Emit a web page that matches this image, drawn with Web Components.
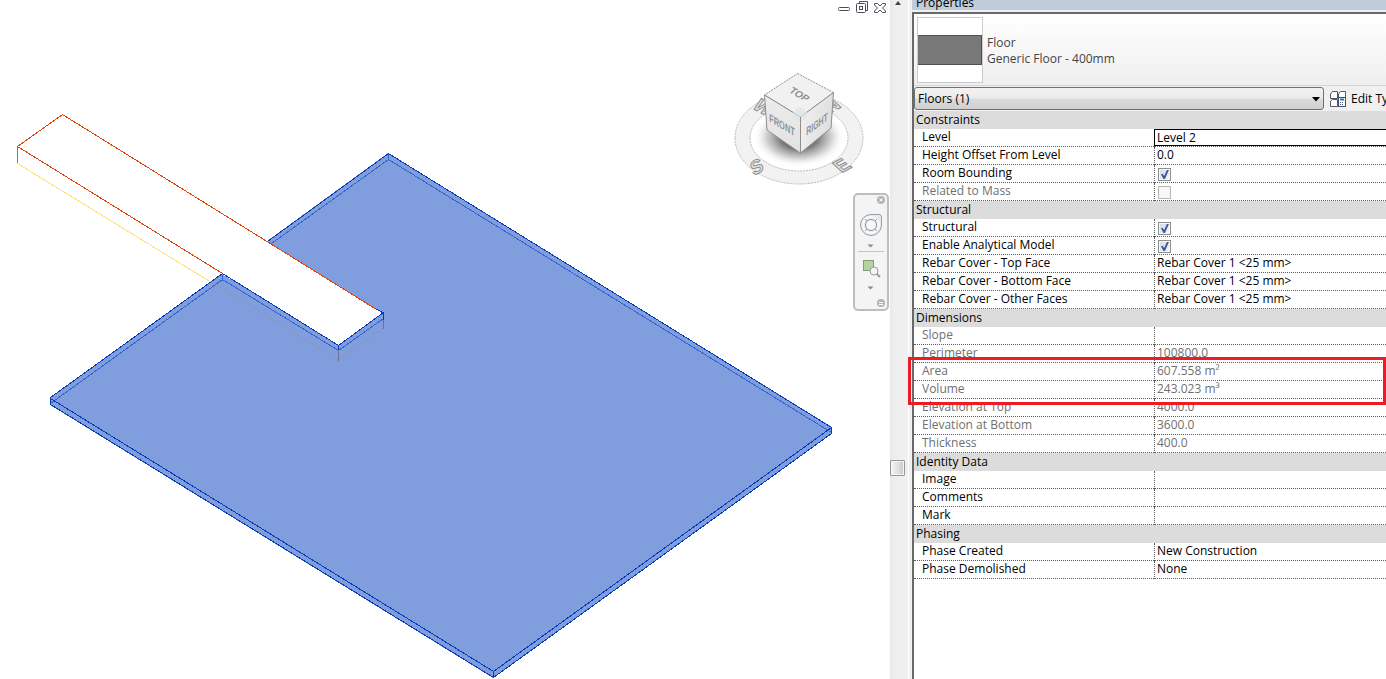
<!DOCTYPE html>
<html lang="en">
<head>
<meta charset="utf-8">
<title>Floor properties</title>
<style>
  html, body { height: 100%; margin: 0; }
  body { background: #fff; font: 12px/16px "Open Sans", "Noto Sans", sans-serif; color: #000; overflow: hidden; }
</style>
</head>
<body>
<modeler-app>
  <model-view slot="view">
    <window-buttons></window-buttons>
    <view-cube></view-cube>
    <nav-bar></nav-bar>
  </model-view>
  <scroll-track slot="scroll"></scroll-track>
  <property-palette slot="palette" heading="Properties" family="Floor" type="Generic Floor - 400mm"></property-palette>
</modeler-app>

<script>
const define = (name, html, setup) => {
  const template = document.createElement('template');
  template.innerHTML = html;
  customElements.define(name, class extends HTMLElement {
    constructor() {
      super();
      this.attachShadow({ mode: 'open' }).append(template.content.cloneNode(true));
    }
    connectedCallback() { if (setup) setup(this, this.shadowRoot); }
  });
};

define('modeler-app', `
  <style>
    :host { display: grid; grid-template-columns: minmax(0, 1fr) 22px 474px; height: 100vh; }
  </style>
  <slot name="view"></slot><slot name="scroll"></slot><slot name="palette"></slot>
`);

define('model-view', `
  <style>
    :host { display: block; position: relative; overflow: hidden; background: #fff; }
    .scene { display: block; width: 100%; height: 100%; fill: none; shape-rendering: crispEdges; }
    .tools { position: absolute; top: 0; right: 0; display: flex; flex-direction: column; align-items: flex-end; }
    .face { fill: #809dde; fill-rule: evenodd; }
    .edge { stroke: #063bb8; }
    .hidden { stroke: #3764cf; }
    .sketch { stroke: #dd4208; }
    .ghost { stroke: #8797c0; }
  </style>
  <svg class="scene" role="img" aria-label="Floor slab, 3D view">
    <path class="face" d="M388 153L832 427V433L493 678L50 405V398L222 274L267 241ZM222 274L338 345L383 313L267 241Z"/>
    <path class="ghost" d="M210 281L338 360L383 328"/>
    <path class="hidden" d="M50.500 403.500L222.500 279.500L338.500 350.500L383.500 318.500M271.500 243.500L388.500 159.500L831.500 432.500M388.500 153.500V159.500M222.500 274.500V280.500"/>
    <path class="edge" d="M267.500 241.500L388.500 153.500L831.500 427.500V433.500L493.500 677.500L50.500 404.500V397.500L222.500 273.500L338.500 345.500L383.500 312.500V320M376 309L383.500 313M831.500 427.500L493.500 671.500L50.500 398.500M493.500 671.500V677.500M338.500 345.500V351"/>
    <path stroke="#66738f" d="M338.500 350V361"/>
    <path stroke="#806a9d" d="M383.500 320V329"/>
    <path stroke="#ffe277" d="M17.500 163.500L211.500 282.500"/>
    <path stroke="#bd7405" d="M17.500 147V163"/>
    <path class="sketch" d="M222.500 273.500L17.500 146.500L62.500 114.500L376.500 309.500"/>
  </svg>
  <div class="tools"><slot></slot></div>
`);

define('window-buttons', `
  <style>
    :host { display: flex; gap: 6px; height: 16px; padding-right: 4px; margin-bottom: 48px; }
    button { width: 12px; height: 16px; padding: 0; border: 0; background: none; }
    svg { display: block; fill: none; stroke: #4a4f5c; }
  </style>
  <button aria-label="Minimise"><svg width="12" height="16" viewBox="0 1 12 16"><rect x=".5" y="8.500" width="11" height="3" rx="1" fill="#fff"/></svg></button>
  <button aria-label="Restore"><svg width="12" height="16" viewBox="0 1 12 16"><path d="M3.500 4V2.500H11.500V11.500H9.500" fill="#fff"/><rect x=".5" y="4.500" width="9" height="9" rx="1" fill="#fff"/><rect x="3.500" y="7.500" width="3" height="3"/></svg></button>
  <button aria-label="Close"><svg width="12" height="16" viewBox="0 0 12 16"><path fill="#fff" d="M.5 3.500H3.500L6 6L8.500 3.500H11.500V5L8.500 8L11.500 11V12.500H8.500L6 10L3.500 12.500H.5V11L3.500 8L.5 5Z"/></svg></button>
`);

define('view-cube', `
  <style>
    :host { display: block; margin-right: 20px; height: 129px; }
    svg { display: block; overflow: visible; }
    text { font: 700 12px "Liberation Sans", sans-serif; fill: #8f9397; text-anchor: middle; }
    .compass text { font-size: 19px; fill: #e4e4e4; stroke: #909090; stroke-width: 1px; }
  </style>
  <svg width="140" height="129" viewBox="730 64 140 129" role="img" aria-label="View cube">
    <defs>
      <radialGradient id="shade"><stop offset=".4" stop-color="#777"/><stop offset=".7" stop-color="#bbb" stop-opacity=".7"/><stop offset="1" stop-color="#fff" stop-opacity="0"/></radialGradient>
      <linearGradient id="right" x2="1" y2=".4"><stop stop-color="#f3f3f3"/><stop offset="1" stop-color="#dedede"/></linearGradient>
      <linearGradient id="front" x2="0" y2="1"><stop stop-color="#ececec"/><stop offset="1" stop-color="#e2e2e2"/></linearGradient>
    </defs>
    <path fill="#f2f2f2" fill-rule="evenodd" stroke="#bbb" stroke-dasharray="2 1" d="M735 138a64 46 0 1 0 128 0a64 46 0 1 0-128 0ZM750 138a49 33 0 1 0 98 0a49 33 0 1 0-98 0Z"/>
    <ellipse cx="799" cy="137" rx="46" ry="30" fill="url(#shade)"/>
    <g class="compass">
      <text transform="translate(759 112) rotate(28) skewX(-20)">W</text>
      <text transform="translate(836 110) rotate(-28) skewX(20)">N</text>
      <text transform="translate(759 173) rotate(-32) skewX(-10)">S</text>
      <text transform="translate(847 170) rotate(-28) skewX(20)">E</text>
    </g>
    <g stroke="#8e8e8e" stroke-linejoin="round">
      <path fill="#f1f1f1" stroke-dasharray="2 1" d="M797.500 73.500L833.500 92.500L800.500 117L764.500 95Z"/>
      <path fill="url(#front)" d="M764.500 95L800.500 117V153L767 130Z"/>
      <path fill="url(#right)" d="M800.500 117L833.500 92.500L831 128L800.500 153Z"/>
    </g>
    <path fill="#e1e4e6" opacity=".7" d="M793 112L799 107L807 111V117L801 122L793 118Z"/>
    <path stroke="#8e8e8e" d="M800.500 117V153"/>
    <text transform="matrix(.72 .42 -.6 .6 797 97)">TOP</text>
    <text transform="matrix(.62 .36 0 .95 782 129)">FRONT</text>
    <text transform="matrix(.58 -.42 0 .95 817 128)">RIGHT</text>
  </svg>
`);

define('nav-bar', `
  <style>
    :host { display: flex; flex-direction: column; align-items: center; box-sizing: border-box; width: 36px; height: 118px; margin-right: 1px;
            border: 2px solid #bdbdbd; border-radius: 5px; background: #f4f4f4; }
    button { display: block; padding: 0; border: 0; background: none; }
    svg { display: block; fill: none; }
    .small { align-self: flex-end; height: 10px; padding-right: 1px; }
    .rule { width: 26px; height: 1px; background: #c4c4c4; }
  </style>
  <button class="small" aria-label="Close navigation bar"><svg width="10" height="10"><circle cx="5" cy="5" r="4" fill="#b5b5b5"/><path d="M3.500 3.500L6.500 6.500M6.500 3.500L3.500 6.500" stroke="#fff"/></svg></button>
  <button aria-label="Steering wheel"><svg width="32" height="36">
    <path fill="#e8ebee" stroke="#9a9fa5" d="M16 9.500H24Q26.500 9.500 26.500 12V20A10.500 10.500 0 1 1 16 9.500Z"/>
    <circle cx="16" cy="20" r="8" stroke="#f8f9fa" stroke-width="2"/>
    <circle cx="16" cy="20" r="5.500" fill="#f6f7f8" stroke="#8f949a"/>
    <path stroke="#9a9fa5" d="M10 14L12 16M22 14L20 16M10 26L12 24M22 26L20 24"/></svg></button>
  <button aria-label="Steering wheel options"><svg width="32" height="10"><path fill="#888" d="M12.500 3.500H18.500L15.500 6.500Z"/></svg></button>
  <div class="rule"></div>
  <button aria-label="Zoom region"><svg width="32" height="32">
    <rect x="8.500" y="8.500" width="10" height="10" fill="#b7d0a5" stroke="#78a56d"/>
    <circle cx="19" cy="19" r="4" fill="#f4f7f9" stroke="#999"/><path d="M22 22L25 25" stroke="#999" stroke-width="2"/></svg></button>
  <button aria-label="Zoom options"><svg width="32" height="14"><path fill="#888" d="M12.500 2.500H18.500L15.500 5.500Z"/></svg></button>
  <button class="small" aria-label="Customise"><svg width="10" height="10"><circle cx="5" cy="5" r="4" fill="#b5b5b5"/><path d="M3 4.500H7M3 6.500H7" stroke="#fff"/></svg></button>
`);

define('scroll-track', `
  <style>
    :host { display: grid; grid-template-columns: 16px 2px 1px 3px; grid-template-rows: 460fr 16px 203fr; background: #f0f0f0; }
    .track { grid-area: 1 / 1 / 4 / 2; background: linear-gradient(90deg, #e8e8e8, #efefef 30%, #f0f0f0); }
    .groove { grid-area: 1 / 3 / 4 / 4; background: #fff; }
    svg { grid-area: 1 / 1; display: block; }
    button { grid-area: 2 / 1; width: 15px; border: 1px solid #979797; border-radius: 1px; padding: 0;
             background: linear-gradient(90deg, #f5f5f5, #e2e2e4 50%, #c8c8cd); box-shadow: inset 0 0 0 1px #f5f5f5; }
  </style>
  <div class="track"></div><div class="groove"></div>
  <svg width="16" height="8"><path d="M5 5L8 1L11 5Z" fill="#444"/></svg>
  <button aria-label="Scroll"></button>
`);

define('property-group', `
  <style>
    :host { display: block; position: relative; }
    table { width: 100%; border-collapse: separate; border-spacing: 0; table-layout: fixed; }
    col:first-child { width: 240px; }
    tr { height: 18px; }
    th, td { box-sizing: border-box; height: 18px; padding: 0; font-weight: 400; text-align: left; vertical-align: top; white-space: nowrap; line-height: 16px; }
    thead th { padding: 1px 0 0 2px; background: #dcdcdc; }
    tbody th { padding-left: 8px; border-bottom: 1px dotted #5c5c5c; }
    td { border-left: 1px dotted #5c5c5c; border-bottom: 1px dotted #5c5c5c; }
    .off { color: #707070; }
    output { display: block; padding-left: 2px; }
    input, select { display: block; box-sizing: border-box; margin: 0; border: 0; border-radius: 0; background: none; color: inherit; font: inherit; outline: 0; appearance: none; }
    input[type=text], select { width: 100%; height: 16px; padding: 0 2px; }
    td.active { border-left: 1px solid #000; }
    td.active input { height: 17px; padding: 0 2px; border: solid #000; border-width: 1px 0 1px 0; line-height: 15px; }
    input[type=checkbox] { width: 13px; height: 13px; margin: 3px 0 0 3px; border: 1px solid #8e8f8f; background: linear-gradient(135deg, #d4d9de, #f8f8f8); box-shadow: inset 0 0 0 1px #f6f6f6; }
    input[type=checkbox]:disabled { border-color: #b8b8b8; background: #f8f8f8; }
    input[type=checkbox]:checked::before { content: ""; display: block; width: 11px; height: 11px; background: #3f589b;
      clip-path: polygon(18% 48%, 34% 44%, 46% 64%, 72% 10%, 90% 10%, 54% 90%, 40% 90%); }
    .mark { position: absolute; top: 48px; left: -6px; right: 0; box-sizing: border-box; height: 48px; border: 3px solid #ed1c24; pointer-events: none; }
  </style>
  <table><colgroup><col><col></colgroup><thead><tr><th colspan="2" scope="colgroup"></th></tr></thead><tbody></tbody></table>
`);

/* Fills a group: each row is [label, kind, value]. */
const fillGroup = (group, { heading, rows, marked }) => {
  const root = group.shadowRoot;
  root.querySelector('thead th').textContent = heading;
  const body = root.querySelector('tbody');
  rows.forEach(([label, kind, value], i) => {
    const id = 'field' + i;
    const tr = body.insertRow();
    const th = document.createElement('th');
    th.scope = 'row';
    const caption = document.createElement('label');
    caption.htmlFor = id;
    caption.textContent = label;
    th.append(caption);
    tr.append(th);
    const td = tr.insertCell();
    const readOnly = kind === 'fixed' || kind === 'check-off';
    if (readOnly) tr.className = 'off';
    if (kind === 'active') td.className = 'active';
    let field;
    if (kind === 'fixed') {
      field = document.createElement('output');
      field.textContent = value;
    } else if (kind === 'choice') {
      field = document.createElement('select');
      field.add(new Option(value));
    } else {
      field = document.createElement('input');
      field.type = kind.startsWith('check') ? 'checkbox' : 'text';
      if (field.type === 'checkbox') { field.checked = value; field.disabled = readOnly; }
      else field.value = value;
    }
    field.id = id;
    td.append(field);
  });
  if (marked) {
    const mark = document.createElement('div');
    mark.className = 'mark';
    root.append(mark);
  }
};

const GROUPS = [
  { heading: 'Constraints', rows: [
    ['Level', 'active', 'Level 2'], ['Height Offset From Level', 'text', '0.0'],
    ['Room Bounding', 'check', true], ['Related to Mass', 'check-off', false]] },
  { heading: 'Structural', rows: [
    ['Structural', 'check', true], ['Enable Analytical Model', 'check', true],
    ['Rebar Cover - Top Face', 'choice', 'Rebar Cover 1 <25 mm>'],
    ['Rebar Cover - Bottom Face', 'choice', 'Rebar Cover 1 <25 mm>'],
    ['Rebar Cover - Other Faces', 'choice', 'Rebar Cover 1 <25 mm>']] },
  { heading: 'Dimensions', marked: true, rows: [
    ['Slope', 'fixed', ''], ['Perimeter', 'fixed', '100800.0'], ['Area', 'fixed', '607.558 m²'],
    ['Volume', 'fixed', '243.023 m³'], ['Elevation at Top', 'fixed', '4000.0'],
    ['Elevation at Bottom', 'fixed', '3600.0'], ['Thickness', 'fixed', '400.0']] },
  { heading: 'Identity Data', rows: [['Image', 'text', ''], ['Comments', 'text', ''], ['Mark', 'text', '']] },
  { heading: 'Phasing', rows: [['Phase Created', 'choice', 'New Construction'], ['Phase Demolished', 'choice', 'None']] },
];

define('property-palette', `
  <style>
    :host { display: flex; flex-direction: column; background: #f0f0f0; }
    h2 { display: flex; align-items: flex-end; box-sizing: border-box; height: 10px; margin: 0 0 2px; padding-left: 4px; background: #bfcddb; font: inherit; line-height: 14px; }
    .frame { flex: 1; display: flex; flex-direction: column; border: solid #696969; border-width: 2px 0 0 2px; background: #fff; }
    .type { display: flex; align-items: center; gap: 4px; box-sizing: border-box; height: 72px; padding-left: 3px; border-bottom: 1px solid #d5d5d5;
            background: linear-gradient(#fff, #efefef); color: #444; }
    .thumb { box-sizing: border-box; width: 66px; height: 66px; padding-top: 17px; border: 1px solid #ccc; background: #fff; }
    .thumb div { box-sizing: border-box; height: 30px; border: solid #505050; border-width: 1px 1px 1px 0; background: #787878; }
    .title { padding-top: 2px; }
    .bar { display: flex; align-items: center; gap: 6px; height: 25px; background: #f0f0f0; overflow: hidden; }
    .pick { position: relative; flex: 1; }
    .pick svg { position: absolute; right: 4px; top: 10px; pointer-events: none; }
    select { display: block; box-sizing: border-box; width: 100%; height: 23px; margin: 0; padding: 1px 3px 0; border: 1px solid #707070; border-radius: 3px; appearance: none;
             background: linear-gradient(#f2f2f2, #ebebeb 48%, #dcdcdc 52%, #cfcfcf); color: #000; font: inherit; }
    .edit { display: flex; align-items: center; gap: 5px; width: 56px; height: 22px; padding: 0; border: 0; background: none; color: #000; font: inherit; white-space: nowrap; }
    .edit svg { flex: none; }
  </style>
  <h2></h2>
  <div class="frame">
    <div class="type">
      <div class="thumb"><div></div></div>
      <div class="title"><div class="family"></div><div class="name"></div></div>
    </div>
    <div class="bar">
      <div class="pick">
        <select aria-label="Element filter"><option>Floors (1)</option></select>
        <svg width="8" height="5"><path d="M0 0H8L4 4.500Z"/></svg>
      </div>
      <button class="edit"><svg width="16" height="16" fill="#fff" stroke="#555a66">
        <path d="M.5 3L2.500 .5H7.500V7.500H.5ZM8.500 3L10.500 .5H15.500V7.500H8.500ZM.5 10L2.500 8.500H7.500V15.500H.5Z"/>
        <rect x="8.500" y="6.500" width="7" height="9" stroke="#3d4f74"/><path d="M10 8.500H14" stroke="#2576c7" stroke-width="2"/><path d="M10 11.500H14M10 13.500H14" stroke-dasharray="1 1"/></svg>Edit Ty</button>
    </div>
    <div class="groups"></div>
  </div>
`, (host, root) => {
  root.querySelector('h2').textContent = host.getAttribute('heading');
  root.querySelector('.family').textContent = host.getAttribute('family');
  root.querySelector('.name').textContent = host.getAttribute('type');
  const list = root.querySelector('.groups');
  for (const data of GROUPS) {
    const group = document.createElement('property-group');
    list.append(group);
    fillGroup(group, data);
  }
});
</script>
</body>
</html>
